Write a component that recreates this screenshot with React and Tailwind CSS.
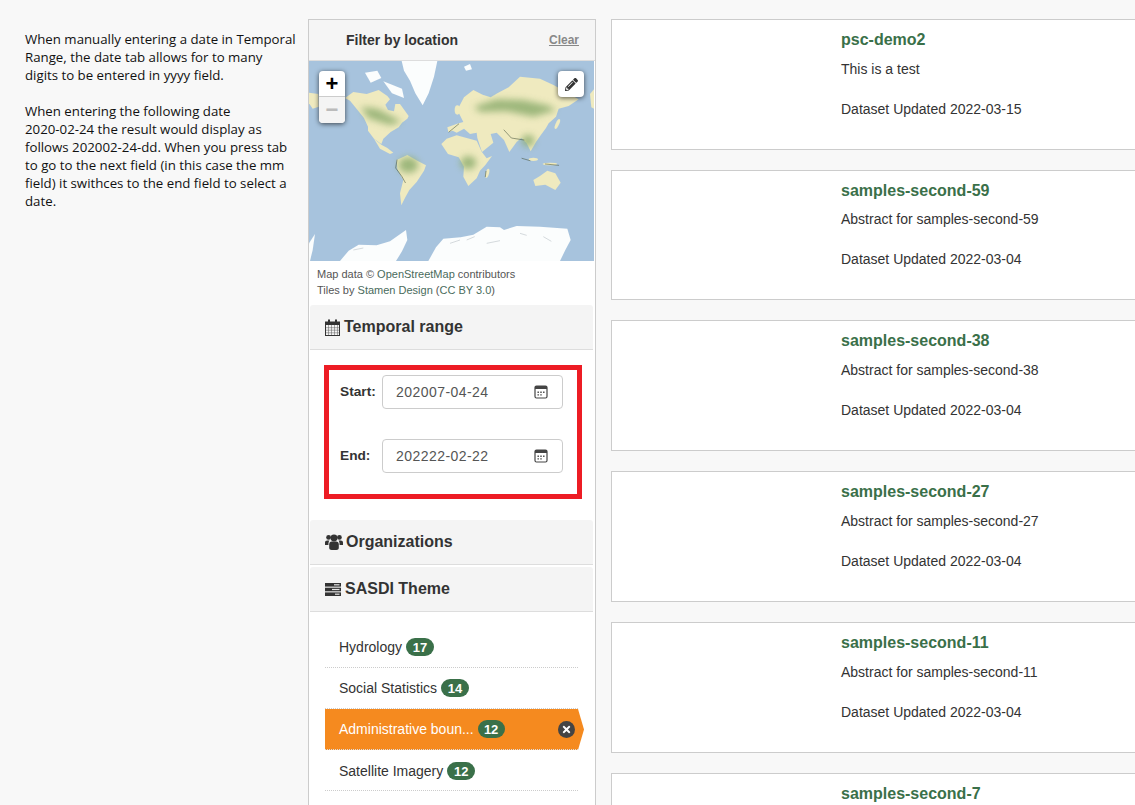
import React from "react";
import { FaPencilAlt, FaTimes } from "react-icons/fa";

const sans = "font-['Liberation_Sans',Arial,sans-serif]";

function CalIcon() {
  return (
    <svg width="15" height="17" viewBox="0 0 15 17" className="text-[#333]" aria-hidden="true">
      <rect x="0.5" y="3" width="14" height="13.5" fill="none" stroke="currentColor" />
      <rect x="0.5" y="3" width="14" height="3" fill="currentColor" />
      <path d="M3.5 6v10M6.5 6v10M9.5 6v10M12.5 6v10M1 8.7h13M1 11.2h13M1 13.8h13" stroke="currentColor" strokeWidth="0.5" opacity="0.8" />
      <rect x="3" y="0.5" width="2" height="4" fill="currentColor" />
      <rect x="10" y="0.5" width="2" height="4" fill="currentColor" />
    </svg>
  );
}

function UsersIcon() {
  return (
    <svg width="18" height="16" viewBox="0 0 18 16" className="text-[#333]" aria-hidden="true">
      <circle cx="3.6" cy="3.4" r="2.4" fill="currentColor" />
      <circle cx="14.4" cy="3.4" r="2.4" fill="currentColor" />
      <circle cx="9" cy="4" r="3.4" fill="currentColor" />
      <path d="M0 11V8.6C0 7.2 .9 6.4 2.2 6.4H4.4C3.7 7.4 3.4 8.8 3.4 11Z" fill="currentColor" />
      <path d="M18 11V8.6C18 7.2 17.1 6.4 15.8 6.4H13.6C14.3 7.4 14.6 8.8 14.6 11Z" fill="currentColor" />
      <path d="M4.2 13.8V10.6C4.2 8.8 5.2 7.6 6.8 7.6H11.2C12.8 7.6 13.8 8.8 13.8 10.6V13.8C13.8 15.2 12.8 16 11.4 16H6.6C5.2 16 4.2 15.2 4.2 13.8Z" fill="currentColor" />
    </svg>
  );
}

function TasksIcon() {
  return (
    <svg width="16" height="13" viewBox="0 0 16 13" className="text-[#333]" aria-hidden="true">
      <rect x="0" y="0" width="16" height="3.6" fill="currentColor" />
      <rect x="0" y="4.7" width="16" height="3.6" fill="currentColor" />
      <rect x="0" y="9.4" width="16" height="3.6" fill="currentColor" />
      <rect x="9" y="1.2" width="5.5" height="1.2" fill="#e4e4e4" />
      <rect x="7" y="5.9" width="7.5" height="1.2" fill="#e4e4e4" />
      <rect x="10" y="10.6" width="4.5" height="1.2" fill="#e4e4e4" />
    </svg>
  );
}

function DateGlyph() {
  return (
    <svg width="14" height="14" viewBox="0 0 14 14" aria-hidden="true">
      <rect x="1" y="1" width="12" height="12" rx="1.5" fill="none" stroke="#444" strokeWidth="1.2" />
      <rect x="1" y="1" width="12" height="3" fill="#444" />
      <path d="M3.5 6.5h1.4v1.4H3.5zM6.3 6.5h1.4v1.4H6.3zM9.1 6.5h1.4v1.4H9.1zM3.5 9.2h1.4v1.4H3.5zM6.3 9.2h1.4v1.4H6.3z" fill="#444" />
    </svg>
  );
}

function WorldMap() {
  return (
    <svg viewBox="27 153 855 600" className="block h-[200px] w-[285px]" aria-hidden="true">
      <defs>
        <filter id="soft" x="-20%" y="-20%" width="140%" height="140%"><feGaussianBlur stdDeviation="1.8" /></filter>
        <filter id="blur" x="-50%" y="-50%" width="200%" height="200%"><feGaussianBlur stdDeviation="11" /></filter>
      </defs>
      <rect x="27" y="153" width="855" height="600" fill="#a7c3dd" />
      <g fill="#efeabf" filter="url(#soft)">
        <path d="M135 264L160 246L200 252L236 240L262 258L270 268L256 284L264 300L282 304L286 282L300 282L326 318L322 326L306 338L296 352L272 366L250 386L244 402L222 386L204 362L204 350L192 324L166 292L150 272Z" />
        <path d="M222 386L244 404L262 414L280 428L270 432L240 416Z" />
        <path d="M290 450L322 435L352 452L378 466L372 482L350 516L328 540L316 562L304 586L300 550L310 510L292 478Z" />
        <path d="M424 402L440 386L470 376L500 384L530 392L545 425L560 445L576 438L556 465L540 482L530 505L505 528L490 500L492 470L476 442L444 432Z" />
        <path d="M445 366L442 352L476 340L490 336L472 300L492 262L520 240L548 254L572 262L592 250L626 232L660 200L720 206L762 226L836 268L806 288L776 296L768 320L746 340L738 354L722 376L708 396L692 424L680 400L664 384L650 396L628 426L612 390L590 368L572 372L580 398L546 426L532 384L530 368L510 372L492 356L470 368L458 362Z" />
        <path d="M700 510L720 498L742 482L766 490L782 518L766 540L736 524L706 528Z" />
        <path d="M27 248L55 252L56 290L38 296L27 280Z" />
        <path d="M870 252L882 238L882 296L874 292Z" />
        <ellipse cx="772" cy="342" rx="5" ry="16" transform="rotate(25 772 342)" />
        <ellipse cx="562" cy="490" rx="5" ry="14" transform="rotate(15 562 490)" />
        <ellipse cx="472" cy="300" rx="8" ry="14" />
        <ellipse cx="700" cy="448" rx="14" ry="5" />
        <ellipse cx="750" cy="462" rx="22" ry="4" />
      </g>
      <g fill="#8fae70" filter="url(#blur)" opacity="0.85">
        <path d="M182 290L232 296L306 336L270 345L205 325Z" />
        <path d="M522 290L590 268L670 270L742 286L770 300L700 320L620 304L540 306Z" />
        <ellipse cx="325" cy="465" rx="30" ry="24" />
        <ellipse cx="505" cy="458" rx="24" ry="20" />
        <ellipse cx="684" cy="392" rx="20" ry="18" />
      </g>
      <g fill="#fbfdfd" filter="url(#soft)">
        <path d="M305 153L412 153L402 200L386 250L368 286L346 250L330 212L312 182Z" />
        <path d="M195 188L232 182L244 204L212 218Z" />
        <path d="M250 214L306 236L312 264L276 250Z" />
        <path d="M492 170L510 162L516 178L498 182Z" />
        <path d="M385 753L408 712L430 686L482 682L520 674L560 650L600 652L612 660L650 648L720 650L802 656L812 690L796 720L780 753Z" />
        <path d="M120 753L146 722L176 704L230 706L270 694L318 660L322 690L306 724L288 753Z" />
        <path d="M27 700L45 672L38 720L30 753L27 753Z" />
      </g>
      <g fill="none" stroke="#46533c" strokeWidth="2.2" opacity="0.75" strokeLinecap="round">
        <path d="M291 450L287 474L306 500L316 518" />
        <path d="M612 360L634 384L672 390" />
        <path d="M447 366L476 342" />
        <path d="M558 484L556 500" />
        <path d="M666 445L690 452M736 462L776 466" />
      </g>
      <g stroke="#7a8791" strokeWidth="1.5" opacity="0.6" fill="none">
        <path d="M450 700l30 -10M500 690l24 -10M660 670l20 6M730 680l24 14M160 720l30 -6M560 700l40 -8" />
      </g>
    </svg>
  );
}

function SectionHead({ icon, children, gap = "gap-[4px]", h }) {
  return (
    <div className={`flex items-center ${gap} ${h} mr-px rounded-t-[3px] border-b border-[#ddd] bg-[#f4f4f4] pl-[15px] text-[16px] leading-[22px] font-bold text-[#333]`}>
      {icon}
      <span>{children}</span>
    </div>
  );
}

function DateRow({ label, value }) {
  return (
    <div className="flex h-[34px] items-center">
      <span className="w-[42px] shrink-0 text-[13.7px] font-bold text-[#333]">{label}</span>
      <div className="flex h-[34px] w-[181px] items-center justify-between rounded-[4px] border border-[#ccc] bg-white pr-[14px] pl-[13px] text-[14px] tracking-[0.45px] text-[#555]">
        <span>{value}</span>
        <DateGlyph />
      </div>
    </div>
  );
}

function Badge({ children, tight }) {
  return (
    <span className={`ml-[4px] inline-flex h-[18px] ${tight ? "w-[27px]" : "w-[28px]"} items-center justify-center rounded-[9px] bg-[#3a7049] pt-px text-[13px] font-bold text-white`}>
      {children}
    </span>
  );
}

function Facet({ label, count, active, low }) {
  if (active) {
    return (
      <li className="relative flex h-[41px] items-center border-b border-dotted border-[#ddd] bg-[#f58a1f] pl-[14px] text-[14px] text-white">
        <span>{label}</span>
        <Badge tight>{count}</Badge>
        <span className="absolute top-0 right-[-6px] h-[41px] w-[6px] bg-[#f58a1f] [clip-path:polygon(0_0,100%_50%,0_100%)]" />
        <span className="absolute top-[12px] right-[3px] flex h-[17px] w-[17px] items-center justify-center rounded-full bg-[#444] text-white">
          <FaTimes size={11} />
        </span>
      </li>
    );
  }
  return (
    <li className={`flex h-[41px] items-center border-b border-dotted border-[#ccc] ${low ? "pt-[2px]" : ""} pl-[14px] text-[14px] text-[#333]`}>
      <span>{label}</span>
      <Badge>{count}</Badge>
    </li>
  );
}

function Card({ title, abstract, date, h, gap = "mt-[8px]" }) {
  return (
    <article className={`${h} shrink-0 border border-r-0 border-[#ccc] bg-white pt-[9px] pl-[229px]`}>
      <h3 className="text-[16px] leading-[22px] font-bold text-[#3a7049]">{title}</h3>
      <p className={`${gap} text-[14px] leading-[20px] text-[#333]`}>{abstract}</p>
      <p className="mt-[20px] text-[14px] leading-[20px] text-[#333]">{date}</p>
    </article>
  );
}

export default function App() {
  return (
    <div className={`flex h-[805px] w-[1135px] overflow-hidden bg-[#f8f8f8] ${sans}`}>
      <aside className="w-[308px] shrink-0 pt-[30px] pl-[25px] font-['Open_Sans',sans-serif] text-[13.25px] leading-[18px] text-[#111]">
        <p>When manually entering a date in Temporal<br />Range, the date tab allows for to many<br />digits to be entered in yyyy field.</p>
        <p className="mt-[18px]">When entering the following date<br />2020-02-24 the result would display as<br />follows 202002-24-dd. When you press tab<br />to go to the next field (in this case the mm<br />field) it swithces to the end field to select a<br />date.</p>
      </aside>

      <section className="mt-[19px] h-[786px] w-[288px] shrink-0 border border-b-0 border-[#ccc] bg-white">
        <div className="flex h-[41px] items-center justify-between border-b border-[#ddd] bg-[#f5f5f5] pr-[16px] pl-[37px]">
          <span className="text-[14px] font-bold text-[#333]">Filter by location</span>
          <span className="text-[12px] font-bold text-[#888] underline">Clear</span>
        </div>
        <div className="relative">
          <WorldMap />
          <div className="absolute top-[10px] left-[10px] w-[26px] rounded-[4px] bg-white shadow-[0_1px_5px_rgba(0,0,0,0.65)]">
            <div className="flex h-[26px] items-center justify-center rounded-t-[4px] border-b border-[#ccc] text-[22px] leading-none font-bold text-black">+</div>
            <div className="flex h-[26px] items-center justify-center rounded-b-[4px] bg-[#f4f4f4] text-[22px] leading-none font-bold text-[#bbb]">−</div>
          </div>
          <div className="absolute top-[10px] right-[11px] flex h-[26px] w-[26px] items-center justify-center rounded-[4px] bg-white text-[#333] shadow-[0_1px_5px_rgba(0,0,0,0.65)]">
            <FaPencilAlt size={13} />
          </div>
        </div>
        <div className="h-[44px] pt-[5px] pl-[8px] text-[11px] leading-[16px] text-[#555]">
          Map data © <span className="text-[#4a6b5c]">OpenStreetMap</span> contributors<br />
          Tiles by <span className="text-[#4a6b5c]">Stamen Design</span> (<span className="text-[#4a6b5c]">CC BY 3.0</span>)
        </div>

        <div className="px-px">
          <SectionHead icon={<CalIcon />} h="h-[45px]">Temporal range</SectionHead>
          <div className="h-[170px] pt-[15px] pl-[14px]">
            <div className="h-[134px] w-[258px] border-[5px] border-[#ed1c24] pt-[5px] pl-[11px]">
              <DateRow label="Start:" value="202007-04-24" />
              <div className="h-[30px]" />
              <DateRow label="End:" value="202222-02-22" />
            </div>
          </div>
          <SectionHead icon={<UsersIcon />} gap="gap-[3px]" h="h-[45px]">Organizations</SectionHead>
          <div className="h-[2px]" />
          <SectionHead icon={<TasksIcon />} h="h-[45px]">SASDI Theme</SectionHead>
          <ul className="mt-[15px] ml-[15px] w-[253px]">
            <Facet label="Hydrology" count="17" />
            <Facet label="Social Statistics" count="14" />
            <Facet label="Administrative boun..." count="12" active />
            <Facet label="Satellite Imagery" count="12" low />
          </ul>
        </div>
      </section>

      <main className="mt-[19px] ml-[15px] flex min-w-0 flex-1 flex-col gap-[20px]">
        <Card h="h-[131px]" title="psc-demo2" abstract="This is a test" date="Dataset Updated 2022-03-15" />
        <Card h="h-[130px]" gap="mt-[7px]" title="samples-second-59" abstract="Abstract for samples-second-59" date="Dataset Updated 2022-03-04" />
        <Card h="h-[131px]" title="samples-second-38" abstract="Abstract for samples-second-38" date="Dataset Updated 2022-03-04" />
        <Card h="h-[131px]" title="samples-second-27" abstract="Abstract for samples-second-27" date="Dataset Updated 2022-03-04" />
        <Card h="h-[131px]" title="samples-second-11" abstract="Abstract for samples-second-11" date="Dataset Updated 2022-03-04" />
        <Card h="h-[131px]" title="samples-second-7" abstract="" date="" />
      </main>
    </div>
  );
}
